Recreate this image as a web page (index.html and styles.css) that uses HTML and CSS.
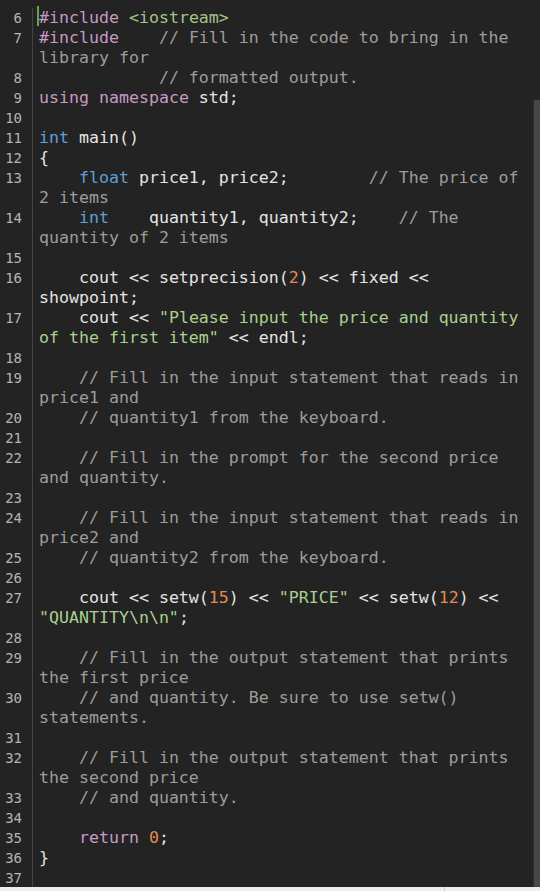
FILE: index.html
```html
<!DOCTYPE html>
<html>
<head>
<meta charset="utf-8">
<link rel="stylesheet" href="styles.css">
</head>
<body>
<div class="editor">
  <div class="lines">
    <div class="ln">6</div><div class="code"><span class="cursor"></span><span class="kw">#include</span> <span class="inc">&lt;iostream&gt;</span></div>
    <div class="ln">7</div><div class="code"><span class="kw">#include</span>    <span class="cm">// Fill in the code to bring in the library for</span></div>
    <div class="ln">8</div><div class="code">            <span class="cm">// formatted output.</span></div>
    <div class="ln">9</div><div class="code"><span class="kw">using</span> <span class="kw">namespace</span> std;</div>
    <div class="ln">10</div><div class="code"></div>
    <div class="ln">11</div><div class="code"><span class="ty">int</span> main()</div>
    <div class="ln">12</div><div class="code">{</div>
    <div class="ln">13</div><div class="code">    <span class="ty">float</span> price1, price2;        <span class="cm">// The price of 2 items</span></div>
    <div class="ln">14</div><div class="code">    <span class="ty">int</span>    quantity1, quantity2;    <span class="cm">// The quantity of 2 items</span></div>
    <div class="ln">15</div><div class="code"></div>
    <div class="ln">16</div><div class="code">    cout &lt;&lt; setprecision(<span class="num">2</span>) &lt;&lt; fixed &lt;&lt; showpoint;</div>
    <div class="ln">17</div><div class="code">    cout &lt;&lt; <span class="str">"Please input the price and quantity of the first item"</span> &lt;&lt; endl;</div>
    <div class="ln">18</div><div class="code"></div>
    <div class="ln">19</div><div class="code">    <span class="cm">// Fill in the input statement that reads in price1 and</span></div>
    <div class="ln">20</div><div class="code">    <span class="cm">// quantity1 from the keyboard.</span></div>
    <div class="ln">21</div><div class="code"></div>
    <div class="ln">22</div><div class="code">    <span class="cm">// Fill in the prompt for the second price and quantity.</span></div>
    <div class="ln">23</div><div class="code"></div>
    <div class="ln">24</div><div class="code">    <span class="cm">// Fill in the input statement that reads in price2 and</span></div>
    <div class="ln">25</div><div class="code">    <span class="cm">// quantity2 from the keyboard.</span></div>
    <div class="ln">26</div><div class="code"></div>
    <div class="ln">27</div><div class="code">    cout &lt;&lt; setw(<span class="num">15</span>) &lt;&lt; <span class="str">"PRICE"</span> &lt;&lt; setw(<span class="num">12</span>) &lt;&lt; <span class="str">"QUANTITY\n\n"</span>;</div>
    <div class="ln">28</div><div class="code"></div>
    <div class="ln">29</div><div class="code">    <span class="cm">// Fill in the output statement that prints the first price</span></div>
    <div class="ln">30</div><div class="code">    <span class="cm">// and quantity. Be sure to use setw() statements.</span></div>
    <div class="ln">31</div><div class="code"></div>
    <div class="ln">32</div><div class="code">    <span class="cm">// Fill in the output statement that prints the second price</span></div>
    <div class="ln">33</div><div class="code">    <span class="cm">// and quantity.</span></div>
    <div class="ln">34</div><div class="code"></div>
    <div class="ln">35</div><div class="code">    <span class="kw">return</span> <span class="num">0</span>;</div>
    <div class="ln">36</div><div class="code">}</div>
    <div class="ln">37</div><div class="code"></div>
  </div>
  <div class="scrollbar"></div>
</div>
<div class="footer"><div class="footer-sep"></div></div>
</body>
</html>
```

FILE: styles.css
```css
html, body {
  margin: 0;
  padding: 0;
  background: #232323;
}
body {
  width: 540px;
  height: 891px;
  overflow: hidden;
}
.editor {
  position: relative;
  height: 887px;
  background: #232323;
  overflow: hidden;
}
.lines {
  display: grid;
  grid-template-columns: 33px 486px;
  grid-auto-rows: minmax(20px, auto);
  padding-top: 8px;
}
.ln {
  font-family: "DejaVu Sans Mono", monospace;
  font-size: 14px;
  line-height: 20px;
  color: #b4b4b4;
  text-align: right;
  padding-right: 10px;
  border-right: 1px solid #444444;
}
.code {
  font-family: "DejaVu Sans Mono", monospace;
  font-size: 16.6px;
  line-height: 20px;
  color: #e4e4e4;
  white-space: pre-wrap;
  word-break: normal;
  padding-left: 6px;
  min-height: 20px;
}
.kw { color: #c69ac6; }
.inc { color: #a3c585; }
.cm { color: #9d9d9d; }
.ty { color: #5f9fd6; }
.num { color: #e38b4f; }
.str { color: #a9d18e; }
.cursor {
  position: relative;
}
.cursor::before {
  content: "";
  position: absolute;
  left: -2px;
  top: -2px;
  width: 2px;
  height: 20px;
  background: #6c9f4e;
}
.scrollbar {
  position: absolute;
  right: 0;
  top: 100px;
  width: 6px;
  height: 787px;
  background: #474747;
  border-left: 1px solid #2c2c2c;
}
.footer {
  height: 4px;
  background: #ededed;
  position: relative;
}
.footer-sep {
  position: absolute;
  left: 444px;
  top: 0;
  width: 1px;
  height: 4px;
  background: #cfcfcf;
}
```
